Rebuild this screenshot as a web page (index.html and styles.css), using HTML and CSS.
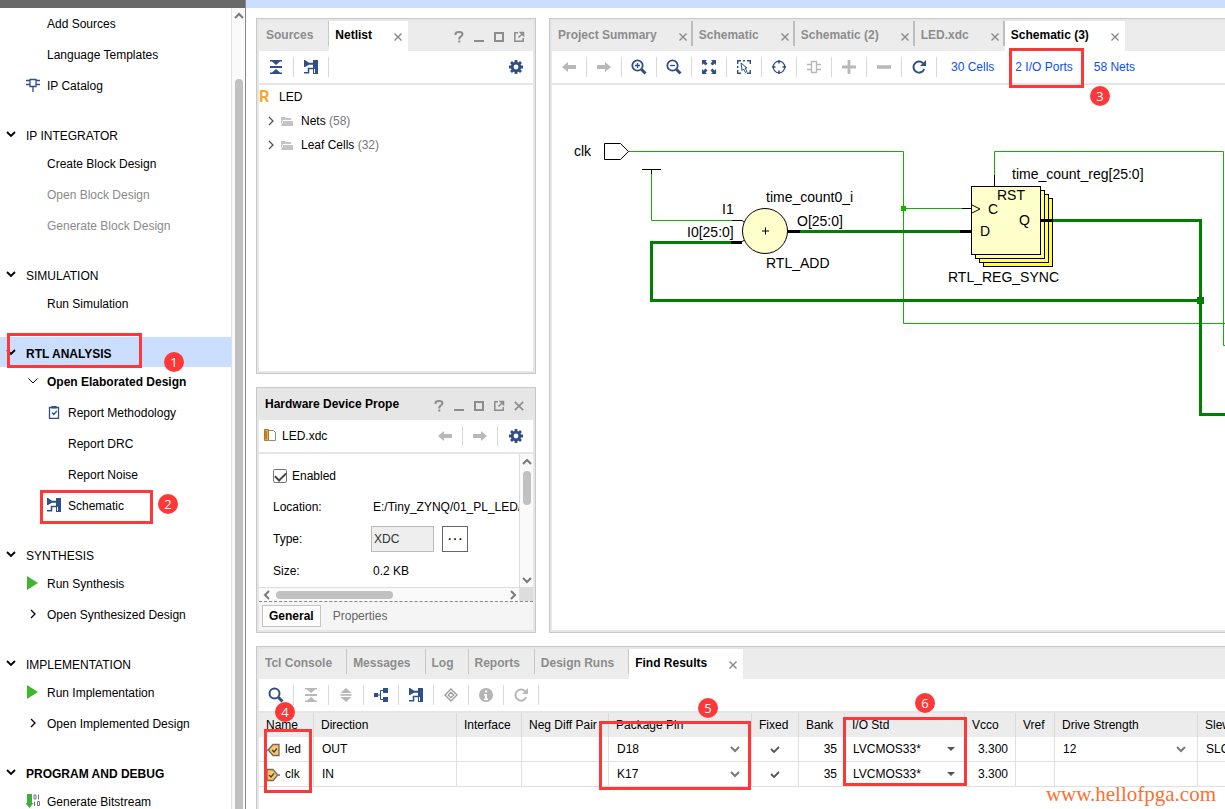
FILE: index.html
```html
<!DOCTYPE html>
<html lang="en">
<head>
    <meta charset="UTF-8">
    <meta name="viewport" content="width=device-width, initial-scale=1.0">
    <title>LED - Elaborated Design</title>
    <link rel="stylesheet" href="styles.css">
</head>
<body>
<!-- Shared icons -->
<svg class="sprite" aria-hidden="true">
    <symbol id="i-down" viewBox="0 0 14 14"><path d="M3 5l4 4 4-4" fill="none" stroke="currentColor" stroke-width="1.800"/></symbol>
    <symbol id="i-down-thin" viewBox="0 0 14 14"><path d="M2.500 4.500L7 9l4.500-4.500" fill="none" stroke="currentColor"/></symbol>
    <symbol id="i-right" viewBox="0 0 14 14"><path d="M5 3l4 4-4 4" fill="none" stroke="currentColor" stroke-width="1.300"/></symbol>
    <symbol id="i-scroll-up" viewBox="0 0 12 12"><path d="M2 8l4-4 4 4" fill="none" stroke="#7a7a7a" stroke-width="2"/></symbol>
    <symbol id="i-scroll-down" viewBox="0 0 12 12"><path d="M2 4l4 4 4-4" fill="none" stroke="#7a7a7a" stroke-width="2"/></symbol>
    <symbol id="i-scroll-left" viewBox="0 0 12 12"><path d="M8 2L4 6l4 4" fill="none" stroke="#7a7a7a" stroke-width="2"/></symbol>
    <symbol id="i-scroll-right" viewBox="0 0 12 12"><path d="M4 2l4 4-4 4" fill="none" stroke="#7a7a7a" stroke-width="2"/></symbol>
    <symbol id="i-close" viewBox="0 0 10 10"><path d="M1.500 1.500l7 7M8.500 1.500l-7 7" fill="none" stroke="currentColor" stroke-width="1.400"/></symbol>
    <symbol id="i-help" viewBox="0 0 12 12"><path d="M2.500 4V3q0-2 3.500-2t3.500 2q0 1.500-1.500 2.300T6.300 7.500V8.500M6.300 9.500v2" fill="none" stroke="currentColor" stroke-width="2"/></symbol>
    <symbol id="i-min" viewBox="0 0 12 12"><path d="M1 10h10" stroke="currentColor" stroke-width="2"/></symbol>
    <symbol id="i-max" viewBox="0 0 12 12"><rect x="2" y="2" width="8" height="8" fill="none" stroke="currentColor" stroke-width="2"/></symbol>
    <symbol id="i-pop" viewBox="0 0 12 12"><path d="M5 1.800H1.800v8.400h8.400V7M5.500 6.500L9 3M7.500 1.500h3v3z" fill="none" stroke="currentColor" stroke-width="1.500"/></symbol>
    <symbol id="i-chip" viewBox="0 0 14 14"><path d="M4 1.500h6v7H4zM0 2.500h4M0 6.500h4M10 2.500h4M10 6.500h4M7 9v5" fill="none" stroke="currentColor" stroke-width="1.300"/></symbol>
    <symbol id="i-clip" viewBox="0 0 14 14"><path d="M2.500 2.500h9v11h-9zM5 7.500l1.800 2 3-3.500" fill="none" stroke="currentColor" stroke-width="1.300"/><path d="M4.500 1h5v2.500h-5z" fill="currentColor"/></symbol>
    <symbol id="i-schem" viewBox="0 0 14 14"><path d="M0 0h1l4 2.800h4V0h5v14H9V4.800H5L1 7H0z" fill="currentColor"/><path d="M0 12.700h4.500V8.500H9" fill="none" stroke="currentColor" stroke-width="1.500"/><path d="M10 9h1v4h-1z" fill="#fff"/></symbol>
    <symbol id="i-play" viewBox="0 0 14 14"><path d="M1 0v14l11-7z" fill="#3fb62c"/></symbol>
    <symbol id="i-bits" viewBox="0 0 14 14"><path d="M1 0h5v9h1.500l-4 5-4-5H1z" fill="#3fae3f"/><path d="M8 1h2v4H8zM12.500.500V5.500M8.500 7.500V12M11.500 7.500h2v4h-2z" fill="none" stroke="#777"/></symbol>
    <symbol id="i-collapse" viewBox="0 0 14 14"><path d="M1 0h12v1.500h-2L7 5 3 1.500H1zM1 6h12v2H1zM1 14h12v-1.500h-2L7 9l-4 3.500H1z" fill="currentColor"/></symbol>
    <symbol id="i-expand" viewBox="0 0 14 14"><path d="M7 0l5.500 5h-11zM1.500 6h11v1.800h-11zM7 14l5.500-5h-11z" fill="currentColor"/></symbol>
    <symbol id="i-gear" viewBox="0 0 14 14"><path d="M7 0v14M0 7h14M2 2l10 10M12 2L2 12" stroke="currentColor" stroke-width="2.800"/><circle cx="7" cy="7" r="3.800" fill="#fff" stroke="currentColor" stroke-width="2.800"/></symbol>
    <symbol id="i-folder" viewBox="0 0 14 14"><path d="M1 3h4l1 1h5v2H3l-2 5z" fill="#c4c4c4"/><path d="M3.500 7H13v5H1z" fill="#c4c4c4"/></symbol>
    <symbol id="i-left-arrow" viewBox="0 0 14 14"><path d="M0 7l6-5v3h8v4H6v3z" fill="currentColor"/></symbol>
    <symbol id="i-right-arrow" viewBox="0 0 14 14"><path d="M14 7L8 2v3H0v4h8v3z" fill="currentColor"/></symbol>
    <symbol id="i-xdc" viewBox="0 0 14 14"><path d="M6 2.500h4.500l2 2v8H6" fill="#fff" stroke="#8a8a8a"/><path d="M1.500 1.500h4v11h-4z" fill="#f4a63c" stroke="#b5772a"/><path d="M2 4h2M2 6h2M2 8h2M2 10h2" stroke="#7a5a2a"/></symbol>
    <symbol id="i-zoom-in" viewBox="0 0 16 16"><circle cx="6.500" cy="6.500" r="5.200" fill="none" stroke="currentColor" stroke-width="1.800"/><path d="M4 6.500h5M6.500 4v5" stroke="currentColor" stroke-width="1.300"/><path d="M10.500 10.500l4 4" stroke="currentColor" stroke-width="3"/></symbol>
    <symbol id="i-zoom-out" viewBox="0 0 16 16"><circle cx="6.500" cy="6.500" r="5.200" fill="none" stroke="currentColor" stroke-width="1.800"/><path d="M4 6.500h5" stroke="currentColor" stroke-width="1.300"/><path d="M10.500 10.500l4 4" stroke="currentColor" stroke-width="3"/></symbol>
    <symbol id="i-search" viewBox="0 0 16 16"><circle cx="6.500" cy="6.500" r="5" fill="none" stroke="currentColor" stroke-width="2"/><path d="M10.500 10.500l4 4" stroke="currentColor" stroke-width="3"/></symbol>
    <symbol id="i-fit" viewBox="0 0 14 14"><path d="M0 0h5L3.500 1.500l2 2-2 2-2-2L0 5zM14 0v5l-1.500-1.500-2 2-2-2 2-2L9 0zM0 14V9l1.500 1.500 2-2 2 2-2 2L5 14zM14 14H9l1.500-1.500-2-2 2-2 2 2L14 9z" fill="currentColor"/></symbol>
    <symbol id="i-select" viewBox="0 0 14 14"><path d="M.700 4V.700H4M10 .700h3.300V4M13.300 10v3.300H10M4 13.300H.700V10M.700 6v2M6 .700h2" fill="none" stroke="currentColor" stroke-width="1.400"/><path d="M4 3l6 5H8l2 3.500-1.500 1L6.500 9 5 10.500z" fill="#fff" stroke="currentColor"/></symbol>
    <symbol id="i-target" viewBox="0 0 14 14"><circle cx="7" cy="7" r="5.800" fill="none" stroke="currentColor" stroke-width="1.300"/><path d="M7 0v3.500M7 10.500v3.500M0 7h3.500M10.500 7h3.500" stroke="currentColor" stroke-width="1.600"/></symbol>
    <symbol id="i-cell" viewBox="0 0 14 14"><path d="M4.500 1.500h5v11h-5zM0 4.500h4M0 9.500h4M10 4.500h4M10 9.500h4" fill="none" stroke="currentColor" stroke-width="1.400"/></symbol>
    <symbol id="i-plus" viewBox="0 0 14 14"><path d="M0 7h14M7 0v14" stroke="currentColor" stroke-width="2.800"/></symbol>
    <symbol id="i-minus" viewBox="0 0 14 14"><path d="M0 7h14" stroke="currentColor" stroke-width="3.500"/></symbol>
    <symbol id="i-reload" viewBox="0 0 14 14"><path d="M12.200 9A5.500 5.500 0 1 1 11 3.300" fill="none" stroke="currentColor" stroke-width="2"/><path d="M14 0v6H8z" fill="currentColor"/></symbol>
    <symbol id="i-tree" viewBox="0 0 14 14"><path d="M0 5h4v4H0zM9 0h5v5H9zM9 9h5v5H9z" fill="currentColor"/><path d="M4 7h2.500M9 2.500H6.500v9H9" fill="none" stroke="currentColor"/></symbol>
    <symbol id="i-diamond" viewBox="0 0 14 14"><path d="M7 1l6 6-6 6-6-6zM7 4.300L9.700 7 7 9.700 4.300 7z" fill="none" stroke="#9a9a9a" stroke-width="1.300"/></symbol>
    <symbol id="i-info" viewBox="0 0 14 14"><circle cx="7" cy="7" r="7" fill="#b4b4b4"/><path d="M6 2.500h2.200v2H6zM5 6h3v4.500h1V12H5v-1.500h1v-3H5z" fill="#fff"/></symbol>
    <symbol id="i-tick" viewBox="0 0 12 12"><path d="M2 6l3 3 5-5" fill="none" stroke="#555" stroke-width="1.800"/></symbol>
    <symbol id="i-out" viewBox="0 0 14 14"><path d="M0 7h3M3 6l4-4.500h6v11H7L3 8z" fill="#fbc465" stroke="#6b6b6b" stroke-width="1.300"/><path d="M6 7l2 2 3-3.500" fill="none" stroke="#444" stroke-width="1.300"/></symbol>
    <symbol id="i-in" viewBox="0 0 14 14"><path d="M14 7h-3M11 6L7 1.500H1v11h6L11 8z" fill="#fbc465" stroke="#6b6b6b" stroke-width="1.300"/><path d="M3 7l2 2 3-3.500" fill="none" stroke="#444" stroke-width="1.300"/></symbol>
    <symbol id="i-caret" viewBox="0 0 12 12"><path d="M2 4h8L6 8z" fill="#555"/></symbol>
</svg>

<div class="topbar"><div class="topbar-nav"></div></div>

<div class="app">
    <nav class="navigator">
        <div class="nav-list">
            <a href="#" class="item">Add Sources</a>
            <a href="#" class="item">Language Templates</a>
            <a href="#" class="item"><svg class="lead navy"><use href="#i-chip"/></svg>IP Catalog</a>

            <h2 class="section"><svg><use href="#i-down"/></svg>IP INTEGRATOR</h2>
            <a href="#" class="item">Create Block Design</a>
            <a href="#" class="item disabled">Open Block Design</a>
            <a href="#" class="item disabled">Generate Block Design</a>

            <h2 class="section"><svg><use href="#i-down"/></svg>SIMULATION</h2>
            <a href="#" class="item">Run Simulation</a>

            <h2 class="section current"><svg><use href="#i-down"/></svg>RTL ANALYSIS</h2>
            <a href="#" class="item open"><svg class="lead"><use href="#i-down-thin"/></svg>Open Elaborated Design</a>
            <a href="#" class="item sub"><svg class="lead navy"><use href="#i-clip"/></svg>Report Methodology</a>
            <a href="#" class="item sub">Report DRC</a>
            <a href="#" class="item sub">Report Noise</a>
            <a href="#" class="item sub"><svg class="lead navy"><use href="#i-schem"/></svg>Schematic</a>

            <h2 class="section"><svg><use href="#i-down"/></svg>SYNTHESIS</h2>
            <a href="#" class="item"><svg class="lead"><use href="#i-play"/></svg>Run Synthesis</a>
            <a href="#" class="item"><svg class="lead"><use href="#i-right"/></svg>Open Synthesized Design</a>

            <h2 class="section"><svg><use href="#i-down"/></svg>IMPLEMENTATION</h2>
            <a href="#" class="item"><svg class="lead"><use href="#i-play"/></svg>Run Implementation</a>
            <a href="#" class="item"><svg class="lead"><use href="#i-right"/></svg>Open Implemented Design</a>

            <h2 class="section bold"><svg><use href="#i-down"/></svg>PROGRAM AND DEBUG</h2>
            <a href="#" class="item"><svg class="lead"><use href="#i-bits"/></svg>Generate Bitstream</a>
        </div>
        <div class="nav-scroll">
            <svg class="arrow"><use href="#i-scroll-up"/></svg>
            <div class="thumb"></div>
        </div>
    </nav>

    <main class="workspace">
        <div class="upper">
            <div class="left-column">
                <section class="panel netlist">
                    <div class="tabs">
                        <button class="tab sources">Sources</button>
                        <button class="tab active closable">Netlist <svg><use href="#i-close"/></svg></button>
                        <div class="controls">
                            <svg><use href="#i-help"/></svg>
                            <svg><use href="#i-min"/></svg>
                            <svg><use href="#i-max"/></svg>
                            <svg><use href="#i-pop"/></svg>
                        </div>
                    </div>
                    <div class="toolbar">
                        <button class="tool" aria-label="Collapse all"><svg><use href="#i-collapse"/></svg></button>
                        <button class="tool" aria-label="Schematic"><svg><use href="#i-schem"/></svg></button>
                        <button class="tool last" aria-label="Settings"><svg><use href="#i-gear"/></svg></button>
                    </div>
                    <ul class="tree">
                        <li><b class="rtl">R</b>LED</li>
                        <li class="child"><svg><use href="#i-right"/></svg><svg><use href="#i-folder"/></svg><span>Nets <i>(58)</i></span></li>
                        <li class="child"><svg><use href="#i-right"/></svg><svg><use href="#i-folder"/></svg><span>Leaf Cells <i>(32)</i></span></li>
                    </ul>
                </section>

                <section class="panel properties">
                    <div class="tabs title-bar">
                        <h3>Hardware Device Prope</h3>
                        <div class="controls">
                            <svg><use href="#i-help"/></svg>
                            <svg><use href="#i-min"/></svg>
                            <svg><use href="#i-max"/></svg>
                            <svg><use href="#i-pop"/></svg>
                            <svg><use href="#i-close"/></svg>
                        </div>
                    </div>
                    <div class="toolbar">
                        <span class="file"><svg><use href="#i-xdc"/></svg>LED.xdc</span>
                        <button class="tool off" aria-label="Previous"><svg><use href="#i-left-arrow"/></svg></button>
                        <button class="tool off" aria-label="Next"><svg><use href="#i-right-arrow"/></svg></button>
                        <button class="tool end" aria-label="Settings"><svg><use href="#i-gear"/></svg></button>
                    </div>
                    <div class="prop-area">
                        <form class="props">
                            <div class="row first"><input type="checkbox" id="enabled" checked><label for="enabled">Enabled</label></div>
                            <div class="row"><span class="key">Location:</span><span class="value">E:/Tiny_ZYNQ/01_PL_LED/</span></div>
                            <div class="row"><label class="key" for="type">Type:</label><input type="text" id="type" value="XDC" readonly><button type="button" class="more" aria-label="Browse">···</button></div>
                            <div class="row"><span class="key">Size:</span><span class="value">0.2 KB</span></div>
                        </form>
                        <div class="v-scroll">
                            <svg><use href="#i-scroll-up"/></svg>
                            <div class="thumb"></div>
                            <svg><use href="#i-scroll-down"/></svg>
                        </div>
                        <div class="h-scroll">
                            <svg><use href="#i-scroll-left"/></svg>
                            <div class="thumb"></div>
                            <svg><use href="#i-scroll-right"/></svg>
                        </div>
                        <div class="corner"></div>
                    </div>
                    <div class="sub-tabs">
                        <button class="selected">General</button>
                        <button>Properties</button>
                    </div>
                </section>
            </div>

            <section class="panel editor">
                <div class="tabs">
                    <button class="tab closable">Project Summary <svg><use href="#i-close"/></svg></button>
                    <button class="tab closable">Schematic <svg><use href="#i-close"/></svg></button>
                    <button class="tab closable">Schematic (2) <svg><use href="#i-close"/></svg></button>
                    <button class="tab closable">LED.xdc <svg><use href="#i-close"/></svg></button>
                    <button class="tab active closable">Schematic (3) <svg><use href="#i-close"/></svg></button>
                </div>
                <div class="toolbar">
                    <button class="tool off" aria-label="Back"><svg><use href="#i-left-arrow"/></svg></button>
                    <button class="tool off" aria-label="Forward"><svg><use href="#i-right-arrow"/></svg></button>
                    <button class="tool" aria-label="Zoom in"><svg class="big"><use href="#i-zoom-in"/></svg></button>
                    <button class="tool" aria-label="Zoom out"><svg class="big"><use href="#i-zoom-out"/></svg></button>
                    <button class="tool" aria-label="Zoom fit"><svg><use href="#i-fit"/></svg></button>
                    <button class="tool" aria-label="Select area"><svg><use href="#i-select"/></svg></button>
                    <button class="tool" aria-label="Autofit"><svg><use href="#i-target"/></svg></button>
                    <button class="tool off" aria-label="Cell"><svg><use href="#i-cell"/></svg></button>
                    <button class="tool off" aria-label="Expand"><svg><use href="#i-plus"/></svg></button>
                    <button class="tool off" aria-label="Collapse"><svg><use href="#i-minus"/></svg></button>
                    <button class="tool" aria-label="Reload"><svg><use href="#i-reload"/></svg></button>
                    <div class="counts">
                        <a href="#">30 Cells</a>
                        <a href="#">2 I/O Ports</a>
                        <a href="#">58 Nets</a>
                    </div>
                </div>
                <svg class="schematic">
                    <!-- clock and reset nets -->
                    <g class="net">
                        <path d="M76.500 66.500H351.500V238.500H1200"/>
                        <path d="M351.500 123.500H410"/>
                        <path d="M99.500 89V135.500H180"/>
                        <path d="M442.500 90V66.500H671.500V260.500H1200"/>
                    </g>
                    <rect class="node" x="349" y="121" width="5" height="5"/>
                    <!-- buses -->
                    <g class="bus">
                        <path d="M179 157.500H99.500V215.500H648.500"/>
                        <path d="M248 146.500H408"/>
                    </g>
                    <!-- adder -->
                    <path class="pin" d="M90 84.500h19M99.500 84.500V89M180 135.500h10l4 3M187 158l6-3"/>
                    <path class="bus-pin" d="M179 157.500h11M235 146.500h13M408 146.500h12"/>
                    <circle class="cell" cx="213" cy="146" r="22.500"/>
                    <path class="pin plus" d="M210 146h7M213.500 142.500v7"/>
                    <!-- register stack -->
                    <rect class="cell s4" x="431.500" y="113.500" width="69" height="68"/>
                    <rect class="cell s3" x="427.500" y="109.500" width="69" height="68"/>
                    <rect class="cell s2" x="423.500" y="105.500" width="69" height="68"/>
                    <rect class="cell" x="419.500" y="101.500" width="69" height="68"/>
                    <path class="pin" d="M442.500 90v11M410 123.500h9M420 120l8 4-8 4"/>
                    <path class="bus-pin" d="M489 135.500h12"/>
                    <path class="bus" d="M501 135.500H648.500V329.500H1200"/>
                    <rect class="bus-node" x="645" y="212" width="7" height="7"/>
                    <!-- input port -->
                    <path class="port" d="M52.500 58.500h16l8 8-8 8h-16z"/>
                    <text x="22" y="71">clk</text>
                    <text x="170" y="129">I1</text>
                    <text x="135" y="152">I0[25:0]</text>
                    <text x="214" y="117">time_count0_i</text>
                    <text x="245" y="141">O[25:0]</text>
                    <text x="214" y="183">RTL_ADD</text>
                    <text x="460" y="94">time_count_reg[25:0]</text>
                    <text x="445" y="115">RST</text>
                    <text x="436" y="129">C</text>
                    <text x="467" y="140">Q</text>
                    <text x="428" y="151">D</text>
                    <text x="396" y="197">RTL_REG_SYNC</text>
                </svg>
            </section>
        </div>

        <section class="panel results">
            <div class="tabs">
                <button class="tab">Tcl Console</button>
                <button class="tab">Messages</button>
                <button class="tab">Log</button>
                <button class="tab">Reports</button>
                <button class="tab">Design Runs</button>
                <button class="tab active closable">Find Results <svg><use href="#i-close"/></svg></button>
            </div>
            <div class="toolbar">
                <button class="tool" aria-label="Find"><svg class="big"><use href="#i-search"/></svg></button>
                <button class="tool off" aria-label="Collapse all"><svg><use href="#i-collapse"/></svg></button>
                <button class="tool off" aria-label="Expand all"><svg><use href="#i-expand"/></svg></button>
                <button class="tool" aria-label="Group"><svg><use href="#i-tree"/></svg></button>
                <button class="tool" aria-label="Schematic"><svg><use href="#i-schem"/></svg></button>
                <button class="tool off" aria-label="Highlight"><svg><use href="#i-diamond"/></svg></button>
                <button class="tool off" aria-label="Info"><svg><use href="#i-info"/></svg></button>
                <button class="tool off" aria-label="Refresh"><svg><use href="#i-reload"/></svg></button>
            </div>
            <table>
                <colgroup>
                    <col class="c-name"><col class="c-wide"><col class="c-iface"><col class="c-neg"><col class="c-wide"><col class="c-fixed">
                    <col class="c-bank"><col class="c-std"><col class="c-vcco"><col class="c-vref"><col class="c-wide"><col class="c-slew">
                </colgroup>
                <thead>
                    <tr><th>Name</th><th>Direction</th><th>Interface</th><th>Neg Diff Pair</th><th>Package Pin</th><th>Fixed</th><th>Bank</th><th>I/O Std</th><th>Vcco</th><th>Vref</th><th>Drive Strength</th><th>Slew</th></tr>
                </thead>
                <tbody>
                    <tr>
                        <td class="name"><svg><use href="#i-out"/></svg>led</td>
                        <td>OUT</td><td></td><td></td>
                        <td class="pick"><select aria-label="Package pin for led"><option>D18</option></select><svg><use href="#i-scroll-down"/></svg></td>
                        <td class="mid"><svg><use href="#i-tick"/></svg></td>
                        <td class="num">35</td>
                        <td class="pick std"><select aria-label="I/O standard for led"><option>LVCMOS33*</option></select><svg><use href="#i-caret"/></svg></td>
                        <td class="num">3.300</td><td></td>
                        <td class="pick"><select aria-label="Drive strength for led"><option>12</option></select><svg><use href="#i-scroll-down"/></svg></td>
                        <td>SLOW</td>
                    </tr>
                    <tr>
                        <td class="name"><svg><use href="#i-in"/></svg>clk</td>
                        <td>IN</td><td></td><td></td>
                        <td class="pick"><select aria-label="Package pin for clk"><option>K17</option></select><svg><use href="#i-scroll-down"/></svg></td>
                        <td class="mid"><svg><use href="#i-tick"/></svg></td>
                        <td class="num">35</td>
                        <td class="pick std"><select aria-label="I/O standard for clk"><option>LVCMOS33*</option></select><svg><use href="#i-caret"/></svg></td>
                        <td class="num">3.300</td><td></td><td></td><td></td>
                    </tr>
                </tbody>
            </table>
        </section>
    </main>
</div>

<!-- Tutorial step marks laid over the window -->
<div class="frame f1"></div><span class="step s-1">1</span>
<div class="frame f2"></div><span class="step s-2">2</span>
<div class="frame f3"></div><span class="step s-3">3</span>
<div class="frame f4"></div><span class="step s-4">4</span>
<div class="frame f5"></div><span class="step s-5">5</span>
<div class="frame f6"></div><span class="step s-6">6</span>
<div class="watermark">www.hellofpga.com</div>
</body>
</html>
```
FILE: styles.css
```css
:root {
    --navy: #2f4f87;
    --off: #b8b8b8;
    --grey: #8c8c8c;
    --tab-bg: #ececec;
    --line: #e6e6e6;
    --edge: #c8c8c8;
    --thumb: #c1c1c1;
    --blue: #ccdeff;
    --mark: #fd3838;
}
* {
    box-sizing: border-box;
}
body {
    margin: 0;
    height: 100vh;
    overflow: hidden;
    position: relative;
    display: flex;
    flex-direction: column;
    background-color: #fff;
    color: #000;
    font-family: "Liberation Sans", Arial, sans-serif;
    font-size: 12px;
    line-height: 16px;
}
svg {
    width: 14px;
    height: 14px;
    flex: none;
    display: block;
}
.sprite {
    position: absolute;
    width: 0;
    height: 0;
}
button, input, select {
    font: inherit;
    color: inherit;
    margin: 0;
    padding: 0;
    border: 0;
    background: none;
}
a {
    color: inherit;
    text-decoration: none;
}
.navy {
    color: var(--navy);
}
.topbar {
    flex: none;
    height: 8px;
    background-color: var(--blue);
}
.topbar-nav {
    width: 246px;
    height: 8px;
    background-color: #696969;
    border-right: 1px solid #888;
}
.app {
    flex: 1;
    min-height: 0;
    display: flex;
}

/* Flow navigator */
.navigator {
    flex: none;
    width: 246px;
    display: flex;
    border-right: 1px solid #888;
    overflow: hidden;
}
.nav-list {
    flex: 1;
    padding-top: 1px;
}
.item {
    display: flex;
    align-items: center;
    height: 31px;
    padding: 0 0 2px 47px;
}
.item .lead {
    margin: 0 7px 2px -21px;
}
.item.sub {
    padding-left: 68px;
}
.item.open, .section.bold {
    font-weight: bold;
}
.item.disabled {
    color: #8a8a8a;
}
.section {
    display: flex;
    align-items: center;
    gap: 8px;
    height: 30px;
    margin: 17px 0 0;
    padding: 4px 0 0 4px;
    font-size: 12px;
    font-weight: normal;
}
.section svg {
    margin-bottom: 4px;
}
.section.current {
    background-color: var(--blue);
    font-weight: bold;
}
.nav-scroll {
    width: 14px;
    border-left: 1px solid #e0e0e0;
    background-color: #fafafa;
    display: flex;
    flex-direction: column;
    align-items: center;
}
.nav-scroll .arrow {
    margin: 2px 0 57px;
}
.thumb {
    background-color: var(--thumb);
    border-radius: 4px;
}
.nav-scroll .thumb {
    width: 8px;
    flex: 1;
    border-radius: 4px 4px 0 0;
}

/* Panels */
.workspace {
    flex: 1;
    min-width: 0;
    display: flex;
    flex-direction: column;
    gap: 13px;
    padding: 10px 0 0 10px;
}
.upper {
    flex: 1;
    min-height: 0;
    display: flex;
    gap: 13px;
}
.left-column {
    flex: none;
    width: 280px;
    display: flex;
    flex-direction: column;
    gap: 13px;
}
.panel {
    border: 1px solid var(--edge);
    box-shadow: inset 0 0 0 2px var(--line);
    padding: 2px;
    display: flex;
    flex-direction: column;
    overflow: hidden;
}
.netlist {
    flex: 1;
}
.editor {
    flex: 1;
    min-width: 0;
    border-right: 0;
    padding-right: 0;
    box-shadow: inset 2px 2px var(--line), inset 0 -2px var(--line);
}
.results {
    flex: none;
    height: 163px;
    border-right: 0;
    border-bottom: 0;
    padding-right: 0;
    padding-bottom: 0;
    box-shadow: inset 2px 2px var(--line);
}
.tabs {
    flex: none;
    display: flex;
    height: 30px;
    background-color: var(--tab-bg);
}
.tab {
    display: flex;
    align-items: flex-start;
    padding: 6px 14px 0 6px;
    border-right: 1px solid var(--edge);
    height: 25px;
    font-weight: bold;
    color: var(--grey);
    white-space: nowrap;
}
.tab svg {
    width: 10px;
    height: 10px;
    margin: 5px 0 0 21px;
    color: #888;
}
.tab.closable {
    padding-right: 3px;
}
.editor .tab {
    border-right: 2px solid #bdbdbd;
}
.tab.sources {
    padding: 6px 15px 0 7px;
}
.tabs .tab.active {
    height: 30px;
    padding-right: 5px;
    border-right: 0;
    background-color: #fff;
    color: #000;
}
.controls {
    display: flex;
    gap: 8px;
    margin-left: auto;
    padding: 10px 8px 0 0;
    color: var(--grey);
}
.controls svg {
    width: 12px;
    height: 12px;
}
.title-bar {
    background-color: var(--line);
}
.title-bar h3 {
    margin: 0;
    padding: 6px 0 0 6px;
    font-size: 12px;
    white-space: nowrap;
}
.toolbar {
    flex: none;
    display: flex;
    align-items: center;
    height: 34px;
    border-bottom: 2px solid var(--line);
    background-color: #fff;
}
.tool {
    width: 35px;
    height: 20px;
    display: flex;
    align-items: center;
    justify-content: center;
    border-right: 1px solid #d9d9d9;
    color: var(--navy);
}
.tool.off {
    color: var(--off);
}
.tool .big {
    width: 16px;
    height: 16px;
}
.tool.last, .tool.end {
    border-right: 0;
}
.tool.last {
    margin-left: auto;
}
.file {
    flex: 1;
    display: flex;
    gap: 5px;
    padding-left: 4px;
}

/* Netlist tree */
.tree {
    list-style: none;
    margin: 0;
    padding: 0;
}
.tree li {
    display: flex;
    align-items: center;
    height: 24px;
}
.tree .rtl {
    width: 20px;
    font-family: Roboto, sans-serif;
    font-size: 16px;
    color: #f7a835;
}
.tree .child {
    padding-left: 5px;
    gap: 2px;
    color: #555;
}
.tree span {
    padding-left: 5px;
    color: #000;
}
.tree i {
    font-style: normal;
    color: #777;
}

/* Properties */
.prop-area {
    display: grid;
    grid-template-columns: 1fr 14px;
    grid-template-rows: 133px 14px;
}
.props {
    min-width: 0;
    padding: 6px 0 0 14px;
    overflow: hidden;
}
.row {
    display: flex;
    align-items: center;
    height: 32px;
}
.row.first {
    height: 31px;
    gap: 5px;
}
.key {
    flex: none;
    width: 98px;
}
.value {
    padding-left: 2px;
    white-space: nowrap;
}
.row input[type="checkbox"] {
    appearance: none;
    width: 14px;
    height: 14px;
    border: 1px solid #777;
    border-radius: 2px;
}
.row input[type="checkbox"]::after {
    content: "";
    display: block;
    width: 9px;
    height: 5px;
    margin: 2px 0 0 1px;
    border: solid #444;
    border-width: 0 0 2px 2px;
    transform: rotate(-45deg);
}
.row input[type="text"] {
    width: 63px;
    height: 26px;
    padding-left: 2px;
    border: 1px solid #bbb;
    background-color: #eee;
    color: #333;
}
.more {
    width: 26px;
    height: 26px;
    margin-left: 8px;
    border: 1px solid #666;
    font-size: 16px;
}
.v-scroll, .h-scroll {
    display: flex;
    align-items: center;
    background-color: #fafafa;
}
.v-scroll {
    flex-direction: column;
    border-left: 1px solid #ddd;
    padding: 2px 0 1px;
}
.h-scroll {
    border-top: 1px solid #ddd;
    padding: 0 0 0 2px;
}
.v-scroll svg, .h-scroll svg, .nav-scroll svg {
    width: 12px;
    height: 12px;
}
.v-scroll .thumb {
    width: 8px;
    height: 34px;
    margin: 3px 0 auto;
}
.h-scroll .thumb {
    width: 117px;
    height: 8px;
    margin: 0 auto 0 3px;
}
.corner {
    background-color: #ddd;
}
.sub-tabs {
    display: flex;
    align-items: center;
    gap: 5px;
    height: 29px;
    padding-left: 3px;
    border-top: 1px dashed #888;
    background-color: #f5f5f5;
}
.sub-tabs button {
    height: 22px;
    padding: 0 6px;
    border: 1px solid transparent;
    color: #666;
}
.sub-tabs .selected {
    border-color: #c4c4c4;
    background-color: #fff;
    color: #000;
    font-weight: bold;
}

/* Schematic canvas */
.counts {
    display: flex;
    gap: 21px;
    padding-left: 14px;
    color: #0a50f0;
}
.schematic {
    flex: 1;
    width: 100%;
    min-height: 0;
    font-size: 14px;
}
.net, .bus, .pin, .bus-pin {
    fill: none;
    stroke-width: 1px;
}
.net {
    stroke: #12b200;
}
.node {
    fill: #12b200;
}
.bus {
    stroke: #008000;
    stroke-width: 3px;
}
.bus-node {
    fill: #008000;
}
.pin {
    stroke: #000;
}
.bus-pin {
    stroke: #000;
    stroke-width: 3px;
}
.cell {
    fill: #ffffcc;
    stroke: #000;
}
.cell.s2 {
    fill: #ffff99;
}
.cell.s3 {
    fill: #ffff66;
}
.cell.s4 {
    fill: #ffff33;
}
.port {
    fill: #fff;
    stroke: #000;
}

/* Find results */
table {
    flex: none;
    width: 1039px;
    table-layout: fixed;
    border-collapse: separate;
    border-spacing: 0;
}
.c-name { width: 55px; }
.c-wide { width: 143px; }
.c-iface { width: 65px; }
.c-neg { width: 87px; }
.c-fixed { width: 47px; }
.c-bank { width: 46px; }
.c-std { width: 120px; }
.c-vcco { width: 51px; }
.c-vref { width: 39px; }
.c-slew { width: 100px; }
th {
    height: 24px;
    padding: 0 0 0 7px;
    background-color: var(--tab-bg);
    border-right: 1px solid #dadada;
    font-weight: normal;
    text-align: left;
    white-space: nowrap;
}
td {
    height: 25px;
    padding: 0 0 0 8px;
    border-right: 1px solid #e0e0e0;
    border-bottom: 1px solid #e0e0e0;
}
.name svg {
    display: inline-block;
    margin-right: 5px;
    vertical-align: middle;
}
td.name {
    padding-left: 7px;
}
td.num {
    padding: 0 7px 0 0;
    text-align: right;
}
td.mid {
    padding: 0;
}
.mid svg {
    width: 12px;
    height: 12px;
    margin: 0 auto;
}
.pick {
    position: relative;
}
.pick select {
    appearance: none;
    display: block;
    width: 100%;
    height: 24px;
}
.pick svg {
    position: absolute;
    right: 10px;
    top: 6px;
    width: 12px;
    height: 12px;
    pointer-events: none;
}
.pick.std svg {
    right: 7px;
}

/* Step marks */
.frame, .step, .watermark {
    position: absolute;
}
.frame {
    border: 3px solid var(--mark);
}
.step {
    width: 20px;
    height: 20px;
    border-radius: 50%;
    background-color: var(--mark);
    color: #fff;
    font-family: "Open Sans", sans-serif;
    font-size: 13px;
    line-height: 20px;
    text-align: center;
}
.f1 { left: 7px; top: 333px; width: 135px; height: 35px; }
.f2 { left: 40px; top: 490px; width: 113px; height: 34px; }
.f3 { left: 1009px; top: 48px; width: 75px; height: 40px; }
.f4 { left: 264px; top: 729px; width: 48px; height: 64px; }
.f5 { left: 599px; top: 721px; width: 152px; height: 69px; }
.f6 { left: 843px; top: 717px; width: 124px; height: 69px; }
.s-1 { left: 164px; top: 352px; }
.s-2 { left: 158px; top: 494px; }
.s-3 { left: 1090px; top: 86px; }
.s-4 { left: 275px; top: 702px; }
.s-5 { left: 698px; top: 698px; }
.s-6 { left: 915px; top: 693px; }
.watermark {
    right: 9px;
    bottom: 2px;
    color: #fb7030;
    font-family: "Liberation Serif", "Times New Roman", serif;
    font-size: 21px;
    line-height: 26px;
}
```
